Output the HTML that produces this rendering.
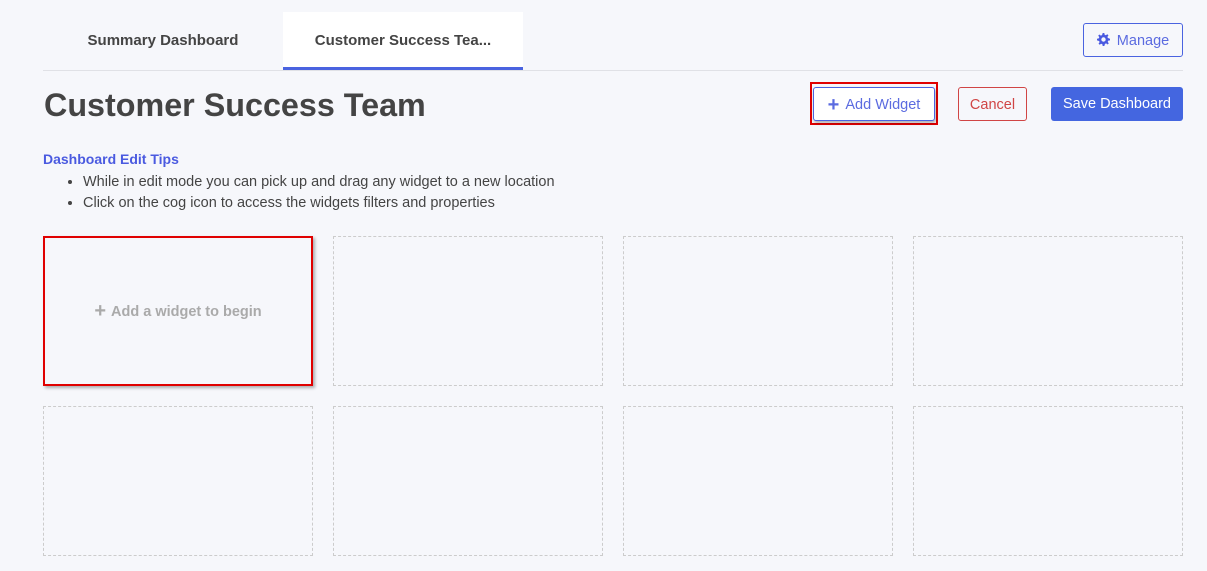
<!DOCTYPE html>
<html><head><style>
*{box-sizing:border-box;margin:0;padding:0}
body{width:1207px;height:571px;background:#f6f7fb;font-family:"Liberation Sans",sans-serif;color:#444;position:relative;overflow:hidden}
.a{position:absolute}
.tab{top:12px;height:58px;font-weight:bold;font-size:15px;line-height:58px;text-align:center;color:#444}
.btn{border-radius:3px;font-size:14.5px;text-align:center;line-height:35px;height:34px;top:87px}
.box{position:absolute;width:270px;height:150px;border:1px dashed #ccc}
</style></head><body>
<div class="a tab" style="left:43px;width:240px">Summary Dashboard</div>
<div class="a tab" style="left:283px;width:240px;background:#fff;border-bottom:3px solid #4a63e0;line-height:57px">Customer Success Tea...</div>
<div class="a" style="left:43px;top:70px;width:1140px;height:1px;background:#e0e1e6"></div>
<div class="a" style="left:1083px;top:23px;width:100px;height:34px;border:1px solid #4a63e0;border-radius:3px;color:#5b6be0;font-size:14.5px;line-height:35px;text-align:center">
<svg width="13" height="13" viewBox="0 0 16 16" style="vertical-align:-1px;margin-right:7px"><path fill="#4a5ae0" d="M7 0h2l.4 2.2 1.5.6 1.8-1.3 1.4 1.4-1.3 1.8.6 1.5L16 7v2l-2.2.4-.6 1.5 1.3 1.8-1.4 1.4-1.8-1.3-1.5.6L9 16H7l-.4-2.2-1.5-.6-1.8 1.3-1.4-1.4 1.3-1.8-.6-1.5L0 9V7l2.2-.4.6-1.5-1.3-1.8 1.4-1.4 1.8 1.3 1.5-.6zM8 5.3A2.7 2.7 0 1 0 8 10.7 2.7 2.7 0 1 0 8 5.3z"/></svg>Manage</div>
<div class="a" style="left:44px;top:87px;font-size:32.3px;font-weight:bold;color:#444">Customer Success Team</div>
<div class="a" style="left:810px;top:82px;width:128px;height:43px;border:2px solid #e00000"></div>
<div class="a btn" style="left:813px;width:122px;border:1px solid #4a63e0;background:#fff;color:#5b6be0;box-shadow:1px 2px 3px rgba(0,0,0,.3)"><span style="font-size:20px;font-weight:bold;vertical-align:-2px;margin-right:6px">+</span>Add Widget</div>
<div class="a btn" style="left:958px;width:69px;border:1px solid #d04545;color:#d04545">Cancel</div>
<div class="a btn" style="left:1051px;width:132px;background:#4466e0;color:#fff">Save Dashboard</div>
<div class="a" style="left:43px;top:151px;font-size:14px;font-weight:bold;color:#4a5ae0">Dashboard Edit Tips</div>
<ul class="a" style="left:83px;top:172px;font-size:14.5px;line-height:21px;color:#444">
<li>While in edit mode you can pick up and drag any widget to a new location</li>
<li>Click on the cog icon to access the widgets filters and properties</li></ul>
<div class="box" style="left:43px;top:236px;border:2px solid #e00000;box-shadow:2px 2px 3px rgba(0,0,0,.3);text-align:center;line-height:146px;font-weight:bold;font-size:14.5px;color:#aaa"><span style="font-size:20px;vertical-align:-1px;margin-right:5px">+</span>Add a widget to begin</div>
<div class="box" style="left:333px;top:236px"></div>
<div class="box" style="left:623px;top:236px"></div>
<div class="box" style="left:913px;top:236px"></div>
<div class="box" style="left:43px;top:406px"></div>
<div class="box" style="left:333px;top:406px"></div>
<div class="box" style="left:623px;top:406px"></div>
<div class="box" style="left:913px;top:406px"></div>
</body></html>
